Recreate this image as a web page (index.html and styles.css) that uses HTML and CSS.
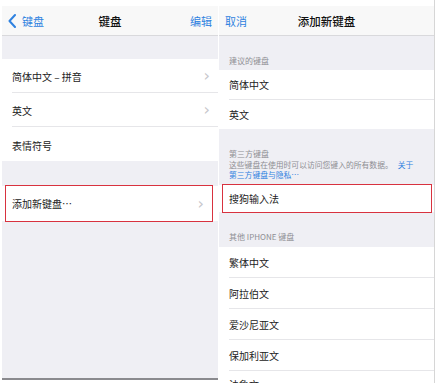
FILE: index.html
```html
<!DOCTYPE html>
<html lang="zh-CN">
<head>
    <meta charset="UTF-8">
    <title>添加新键盘</title>
    <link rel="stylesheet" href="styles.css">
</head>
<body>
    <div class="screens">
        <!-- left: keyboard list -->
        <div class="phone phone-left">
            <div class="status"></div>
            <div class="nav">
                <span class="nav-left"><svg class="back" viewBox="0 0 8 14" width="8" height="14"><path d="M7 1 L1.5 7 L7 13" fill="none" stroke="#2f82e0" stroke-width="2" stroke-linecap="round" stroke-linejoin="round"/></svg>键盘</span>
                <span class="nav-title">键盘</span>
                <span class="nav-right">编辑</span>
            </div>
            <div class="gap gap-top"></div>
            <div class="group">
                <div class="row tall">简体中文 – 拼音<span class="chev">&rsaquo;</span></div>
                <div class="row tall">英文<span class="chev">&rsaquo;</span></div>
                <div class="row tall last">表情符号</div>
            </div>
            <div class="gap gap-mid"></div>
            <div class="group">
                <div class="row add marked">添加新键盘…<span class="chev">&rsaquo;</span></div>
            </div>
            <div class="filler"></div>
            <div class="bottom-line"></div>
        </div>

        <!-- right: add new keyboard -->
        <div class="phone phone-right">
            <div class="status"></div>
            <div class="nav">
                <span class="nav-left">取消</span>
                <span class="nav-title">添加新键盘</span>
                <span class="nav-right"></span>
            </div>
            <div class="section-head first">建议的键盘</div>
            <div class="group">
                <div class="row">简体中文</div>
                <div class="row last">英文</div>
            </div>
            <div class="section-head third">
                <div class="head-title">第三方键盘</div>
                <div class="note">这些键盘在使用时可以访问您键入的所有数据。<span class="link">关于</span></div>
                <div class="note"><span class="link">第三方键盘与隐私…</span></div>
            </div>
            <div class="group">
                <div class="row marked sogou">搜狗输入法</div>
            </div>
            <div class="section-head other">其他 IPHONE 键盘</div>
            <div class="group list-end">
                <div class="row">繁体中文</div>
                <div class="row">阿拉伯文</div>
                <div class="row">爱沙尼亚文</div>
                <div class="row">保加利亚文</div>
                <div class="row last cut">法鲁文</div>
            </div>
        </div>
    </div>
</body>
</html>
```

FILE: styles.css
```css
body {
    margin: 0;
    background-color: #ffffff;
    font-family: "Noto Sans CJK SC", "Noto Sans", sans-serif;
    color: #222222;
}

.screens {
    display: flex;
    width: 440px;
    height: 391px;
    overflow: hidden;
}

.phone {
    display: flex;
    flex-direction: column;
    background-color: #efeff4;
    overflow: hidden;
}

.phone-left {
    width: 216px;
    height: 380px;
    margin-left: 2px;
}

.phone-right {
    width: 215px;
    height: 383px;
    margin-left: 1px;
    border-right: 1px solid #d6d6d6;
}

.status {
    height: 6px;
    background-color: #ffffff;
    flex-shrink: 0;
}

.nav {
    height: 29px;
    flex-shrink: 0;
    display: flex;
    align-items: center;
    justify-content: space-between;
    background-color: #f8f8f8;
    border-bottom: 1px solid #d9d9dc;
    padding: 0 6px;
    font-size: 11px;
    position: relative;
}

.nav-left,
.nav-right {
    color: #2f82e0;
    display: flex;
    align-items: center;
}

.back {
    margin-right: 6px;
}

.nav-title {
    position: absolute;
    left: 0;
    right: 0;
    text-align: center;
    font-size: 11.5px;
    font-weight: 500;
    color: #111111;
    pointer-events: none;
}

.gap {
    flex-shrink: 0;
}

.gap-top {
    height: 23px;
}

.gap-mid {
    height: 25px;
}

.group {
    background-color: #ffffff;
    flex-shrink: 0;
}

.row {
    height: 29px;
    display: flex;
    align-items: center;
    margin-left: 10px;
    padding-right: 10px;
    font-size: 10px;
    border-bottom: 1px solid #e6e6e9;
    position: relative;
}

.row.tall {
    padding-top: 2px;
    box-sizing: border-box;
    height: 34px;
}

.row.last {
    border-bottom: none;
}

.chev {
    position: absolute;
    right: 8px;
    top: 50%;
    transform: translateY(-55%);
    color: #c7c7cc;
    font-family: "DejaVu Sans", sans-serif;
    font-size: 16px;
}

.row.add {
    height: 35px;
    border-bottom: none;
}

.marked {
    margin-left: 4px;
    padding-left: 6px;
    outline: 1.5px solid #d8323f;
}

.phone-left .marked {
    margin-right: 6px;
}

.filler {
    flex: 1;
}

.bottom-line {
    height: 2px;
    background-color: #8a8a8e;
    flex-shrink: 0;
}

.section-head {
    flex-shrink: 0;
    padding: 0 10px;
    font-size: 8px;
    color: #8e8e93;
}

.section-head.first {
    height: 34px;
    display: flex;
    align-items: flex-end;
    line-height: 18px;
}

.section-head.third {
    padding-top: 20px;
    height: 56px;
    box-sizing: border-box;
}

.head-title {
    line-height: 10px;
    margin-bottom: 1px;
}

.note {
    font-size: 7.8px;
    line-height: 9.5px;
    white-space: nowrap;
}

.note .link {
    color: #2f82e0;
    margin-left: 5px;
}

.note:last-child .link {
    margin-left: 0;
}

.row.sogou {
    height: 27px;
    margin-right: 3px;
    border-bottom: none;
}

.section-head.other {
    height: 35px;
    display: flex;
    align-items: flex-end;
    line-height: 20px;
}

.list-end .row {
    height: 29px;
    padding-top: 1px;
}

.row.cut {
    height: 20px;
    align-items: flex-end;
}
```
